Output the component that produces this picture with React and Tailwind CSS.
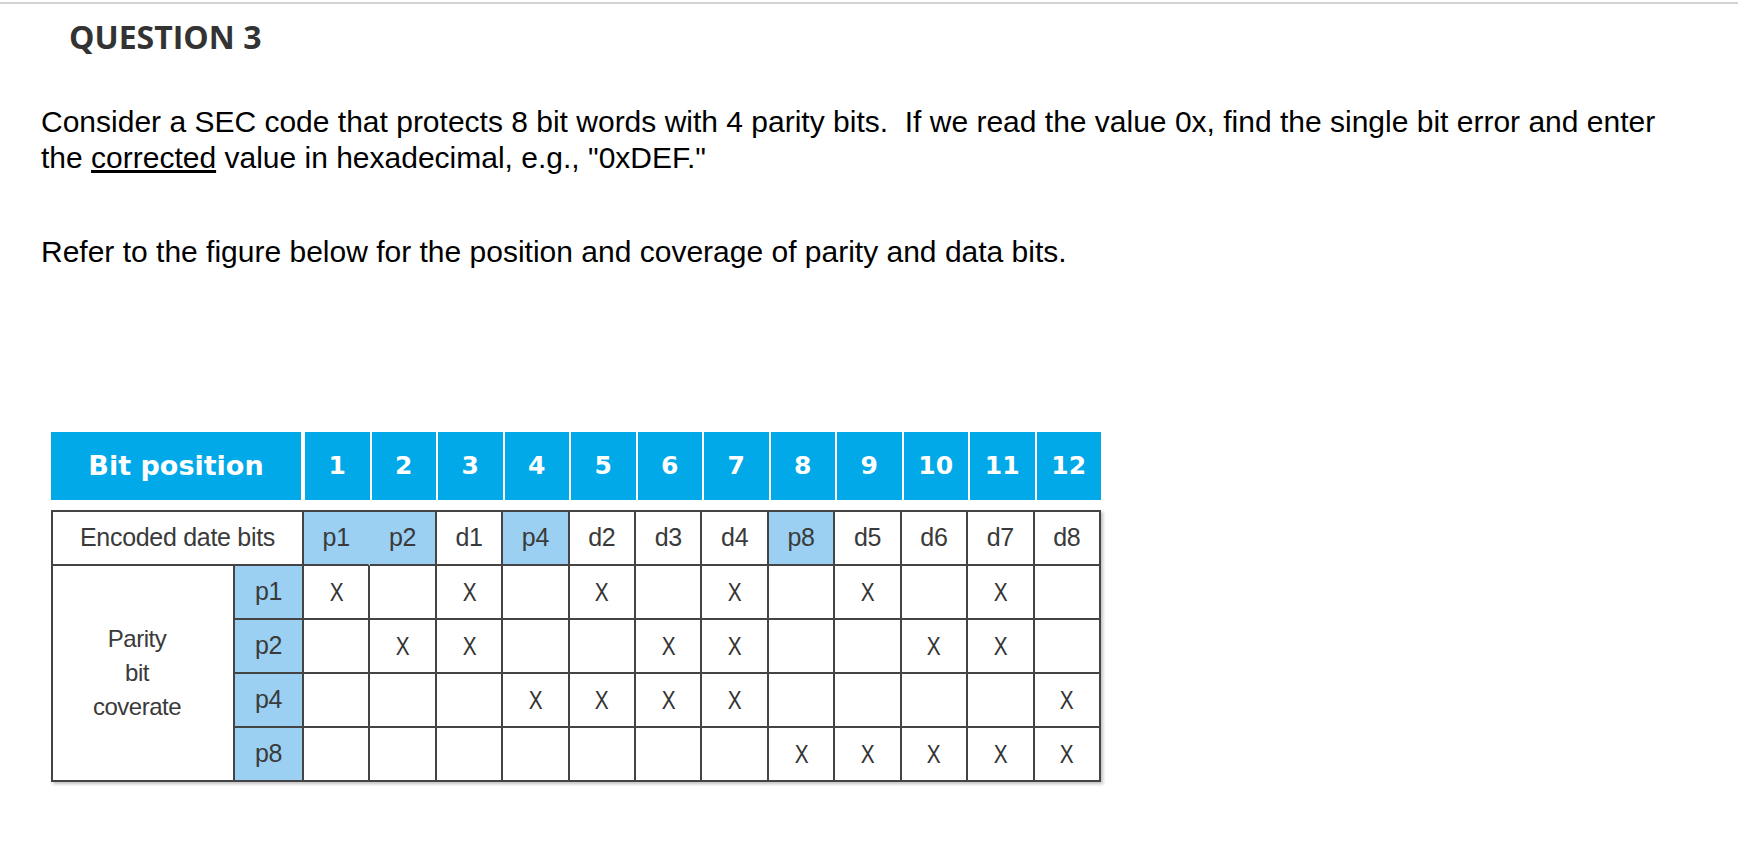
import React from "react";

const encoded = [
  { label: "p1", parity: true },
  { label: "p2", parity: true },
  { label: "d1" },
  { label: "p4", parity: true },
  { label: "d2" },
  { label: "d3" },
  { label: "d4" },
  { label: "p8", parity: true },
  { label: "d5" },
  { label: "d6" },
  { label: "d7" },
  { label: "d8" },
];

const coverage = [
  { name: "p1", bits: [1, 3, 5, 7, 9, 11] },
  { name: "p2", bits: [2, 3, 6, 7, 10, 11] },
  { name: "p4", bits: [4, 5, 6, 7, 12] },
  { name: "p8", bits: [8, 9, 10, 11, 12] },
];

const positions = [1, 2, 3, 4, 5, 6, 7, 8, 9, 10, 11, 12];

const BitTable = () => {
  return (
    <div className="ml-[51px] mt-[162px] w-[1050px]">
      {/* blue header strip */}
      <div className="flex h-[68px] gap-[4px] font-['DejaVu_Sans',sans-serif] font-bold text-white">
        <div className="flex w-[250px] items-center justify-center bg-[#02a9e8] text-[27px]">
          Bit position
        </div>
        <div className="grid flex-1 grid-cols-12 gap-[2px]">
          {positions.map((p) => (
            <div
              key={p}
              className="flex items-center justify-center bg-[#02a9e8] text-[25px]"
            >
              {p}
            </div>
          ))}
        </div>
      </div>

      {/* encoded bits and coverage */}
      <div className="mt-[10px] grid auto-rows-[54px] grid-cols-[182px_69px_repeat(12,minmax(0,1fr))] border-l-2 border-t-2 border-[#444] text-[25px] tracking-[-0.3px] text-[#3a3a3a] shadow-[2px_2px_3px_rgba(0,0,0,0.25)]">
        <div className="col-span-2 flex items-center justify-center border-b-2 border-r-2 border-[#444]">
          Encoded date bits
        </div>
        {encoded.map((cell, i) => (
          <div
            key={cell.label}
            className={`flex items-center justify-center border-b-2 border-r-2 ${
              cell.parity ? "bg-[#9bd0f3]" : "bg-white"
            } ${i === 0 ? "border-r-[#9bd0f3] border-b-[#444]" : "border-[#444]"}`}
          >
            {cell.label}
          </div>
        ))}

        <div className="row-span-4 flex flex-col items-center justify-center border-b-2 border-r-2 border-[#444] pr-[12px] text-[24px] leading-[34px] tracking-[-0.5px]">
          <span>Parity</span>
          <span>bit</span>
          <span>coverate</span>
        </div>
        {coverage.map((row) => (
          <React.Fragment key={row.name}>
            <div className="flex items-center justify-center border-b-2 border-r-2 border-[#444] bg-[#9bd0f3]">
              {row.name}
            </div>
            {positions.map((p) => (
              <div
                key={p}
                className="flex items-center justify-center border-b-2 border-r-2 border-[#444] text-[26px] text-[#333]"
              >
                {row.bits.includes(p) ? (
                  <span className="inline-block scale-x-[0.8]">X</span>
                ) : (
                  ""
                )}
              </div>
            ))}
          </React.Fragment>
        ))}
      </div>
    </div>
  );
};

const App = () => {
  return (
    <div className="min-h-screen bg-white font-['Liberation_Sans',Arial,sans-serif]">
      <div className="mt-[2px] h-[2px] bg-[#d2d2d2]" />
      <h1 className="ml-[69px] mt-[12px] font-['Open_Sans',sans-serif] text-[32px] font-bold leading-[42px] text-[#333]">
        QUESTION 3
      </h1>
      <div className="pl-[41px] pt-[46px] text-[30px] leading-[36px] text-black">
        <p>
          Consider a SEC code that protects 8 bit words with 4 parity bits.&nbsp; If we
          read the value 0x, find the single bit error and enter
          <br />
          the <u>corrected</u> value in hexadecimal, e.g., "0xDEF."
        </p>
        <p className="mt-[58px]">
          Refer to the figure below for the position and coverage of parity and data bits.
        </p>
      </div>
      <BitTable />
    </div>
  );
};

export default App;
